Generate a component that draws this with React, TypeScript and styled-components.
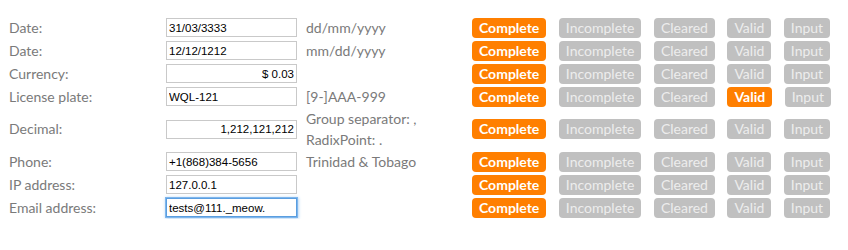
import React from "react";
import styled, { createGlobalStyle, css } from "styled-components";

const Global = createGlobalStyle`
  body {
    margin: 8px;
    background: #ffffff;
    font-family: Lato, "Open Sans", sans-serif;
  }
`;

const Form = styled.div`
  padding: 8px 0 0 1px;
  display: flex;
  flex-direction: column;
`;

const Row = styled.div<{ $tall?: boolean }>`
  display: grid;
  grid-template-columns: 157px 131px 175px auto;
  align-items: center;
  height: ${(p) => (p.$tall ? 42 : 23)}px;
`;

const Label = styled.div`
  font-size: 14px;
  color: #7a7a7a;
  line-height: 20px;
  white-space: nowrap;
`;

const Field = styled.input<{ $right?: boolean; $focused?: boolean }>`
  box-sizing: border-box;
  width: 131px;
  height: 19px;
  margin: 0;
  padding: 0 2px;
  border: 1px solid #c9c9c9;
  border-radius: 0;
  background: #fff;
  font-family: "Liberation Sans", Arial, sans-serif;
  font-size: 11.5px;
  color: #000;
  text-align: ${(p) => (p.$right ? "right" : "left")};
  outline: none;
  ${(p) =>
    p.$focused &&
    css`
      border-color: #5a9ee0;
      box-shadow: 0 0 0 1px #7fb6ec, 0 0 3px 1.5px #a6cdf3;
    `}
`;

const Hint = styled.div`
  padding-left: 9px;
  font-size: 14px;
  color: #7a7a7a;
  line-height: 21px;
  white-space: nowrap;
`;

const Buttons = styled.div`
  display: flex;
  align-items: center;
  gap: 12.5px;
`;

const Badge = styled.span<{ $on?: boolean }>`
  display: inline-flex;
  align-items: center;
  height: 20px;
  padding: 0 7px;
  border-radius: 4px;
  font-size: 14px;
  line-height: 20px;
  white-space: nowrap;
  background: ${(p) => (p.$on ? "#ff7f00" : "#c0c0c0")};
  color: ${(p) => (p.$on ? "#ffffff" : "#ededed")};
  font-weight: ${(p) => (p.$on ? 700 : 400)};
`;

type RowData = {
  label: string;
  value: string;
  hint?: React.ReactNode;
  right?: boolean;
  focused?: boolean;
  tall?: boolean;
  valid?: boolean;
};

const rows: RowData[] = [
  { label: "Date:", value: "31/03/3333", hint: "dd/mm/yyyy" },
  { label: "Date:", value: "12/12/1212", hint: "mm/dd/yyyy" },
  { label: "Currency:", value: "$ 0.03", right: true },
  { label: "License plate:", value: "WQL-121", hint: "[9-]AAA-999", valid: true },
  {
    label: "Decimal:",
    value: "1,212,121,212",
    right: true,
    tall: true,
    hint: (
      <>
        Group separator: ,
        <br />
        RadixPoint: .
      </>
    ),
  },
  { label: "Phone:", value: "+1(868)384-5656", hint: "Trinidad & Tobago" },
  { label: "IP address:", value: "127.0.0.1" },
  { label: "Email address:", value: "tests@111._meow.", focused: true },
];

export default function App() {
  return (
    <>
      <Global />
      <Form>
        {rows.map((r, i) => (
          <Row key={i} $tall={r.tall}>
            <Label>{r.label}</Label>
            <Field readOnly value={r.value} $right={r.right} $focused={r.focused} />
            <Hint>{r.hint}</Hint>
            <Buttons>
              <Badge $on>Complete</Badge>
              <Badge>Incomplete</Badge>
              <Badge>Cleared</Badge>
              <Badge $on={r.valid}>Valid</Badge>
              <Badge>Input</Badge>
            </Buttons>
          </Row>
        ))}
      </Form>
    </>
  );
}
